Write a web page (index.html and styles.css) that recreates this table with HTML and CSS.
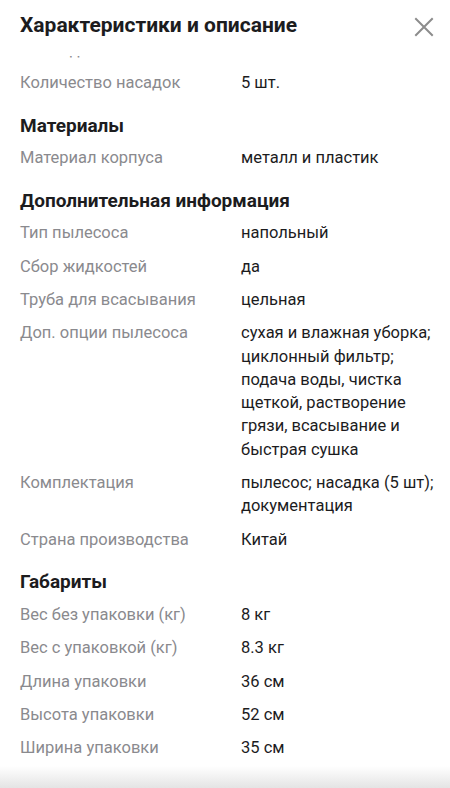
FILE: index.html
```html
<!DOCTYPE html>
<html lang="ru">
<head>
<meta charset="utf-8">
<link rel="stylesheet" href="styles.css">
</head>
<body>
<div class="page">
  <header class="top">
    <h1 class="title">Характеристики и описание</h1>
    <button class="close" aria-label="Закрыть">
      <svg width="20" height="20" viewBox="0 0 20 20"><path d="M2 2L18 18M18 2L2 18" stroke="#8c8c8c" stroke-width="2" stroke-linecap="square" fill="none"/></svg>
    </button>
  </header>
  <main class="content">
    <div class="list">
      <div class="row"><div class="label">Вес изделия</div><div class="value">есть</div></div>
      <div class="row"><div class="label">Количество насадок</div><div class="value">5 шт.</div></div>

      <h2 class="heading">Материалы</h2>
      <div class="row"><div class="label">Материал корпуса</div><div class="value">металл и пластик</div></div>

      <h2 class="heading">Дополнительная информация</h2>
      <div class="row"><div class="label">Тип пылесоса</div><div class="value">напольный</div></div>
      <div class="row"><div class="label">Сбор жидкостей</div><div class="value">да</div></div>
      <div class="row"><div class="label">Труба для всасывания</div><div class="value">цельная</div></div>
      <div class="row"><div class="label">Доп. опции пылесоса</div><div class="value">сухая и влажная уборка; циклонный фильтр; подача воды, чистка щеткой, растворение грязи, всасывание и быстрая сушка</div></div>
      <div class="row"><div class="label">Комплектация</div><div class="value">пылесос; насадка (5 шт); документация</div></div>
      <div class="row"><div class="label">Страна производства</div><div class="value">Китай</div></div>

      <h2 class="heading">Габариты</h2>
      <div class="row"><div class="label">Вес без упаковки (кг)</div><div class="value">8 кг</div></div>
      <div class="row"><div class="label">Вес с упаковкой (кг)</div><div class="value">8.3 кг</div></div>
      <div class="row"><div class="label">Длина упаковки</div><div class="value">36 см</div></div>
      <div class="row"><div class="label">Высота упаковки</div><div class="value">52 см</div></div>
      <div class="row"><div class="label">Ширина упаковки</div><div class="value">35 см</div></div>
    </div>
  </main>
  <div class="shade"></div>
</div>
</body>
</html>
```
FILE: styles.css
```css
* { box-sizing: border-box; }
html, body { margin: 0; padding: 0; background: #fff; }
body { font-family: Roboto, "Noto Sans", sans-serif; color: #1c1c1e; }
.page {
  width: 450px;
  height: 788px;
  display: flex;
  flex-direction: column;
  overflow: hidden;
}
.top {
  flex: 0 0 56px;
  display: flex;
  align-items: flex-start;
  justify-content: space-between;
  padding: 11px 14px 0 20px;
  background: #fff;
}
.title {
  margin: 0;
  font-size: 21px;
  line-height: 28px;
  font-weight: 700;
  color: #1c1c1e;
}
.close {
  border: 0;
  background: none;
  padding: 0;
  margin-top: 4px;
  width: 24px;
  height: 24px;
  display: flex;
  align-items: center;
  justify-content: center;
}
.content {
  flex: 1 1 auto;
  overflow: hidden;
}
.list {
  margin-top: -23.5px;
  padding: 0 8px 0 20px;
}
.row {
  display: grid;
  grid-template-columns: 221px 1fr;
  padding: 5px 0;
  font-size: 16.5px;
  line-height: 23.3px;
}
.label { color: #8a8a8e; }
.value { color: #1c1c1e; }
.heading {
  margin: 14.5px 0 3.5px;
  font-size: 19px;
  line-height: 24px;
  font-weight: 700;
  color: #1c1c1e;
}
.shade {
  flex: 0 0 22px;
  background: linear-gradient(to bottom, #ffffff, #e4e4e4);
}
```
